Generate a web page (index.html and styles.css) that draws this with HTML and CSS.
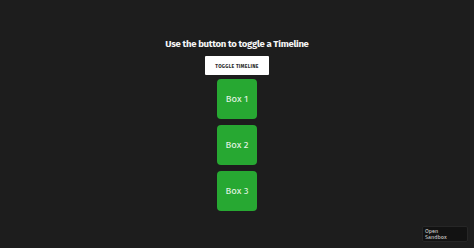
FILE: index.html
```html
<!DOCTYPE html>
<html>
<head>
<meta charset="utf-8">
<link rel="stylesheet" href="styles.css">
</head>
<body>
<main class="app">
  <h2 class="title">Use the button to toggle a Timeline</h2>
  <button class="toggle">TOGGLE TIMELINE</button>
  <div class="boxes">
    <div class="box">Box 1</div>
    <div class="box">Box 2</div>
    <div class="box">Box 3</div>
  </div>
</main>
<a class="sandbox">Open<br>Sandbox</a>
</body>
</html>
```
FILE: styles.css
```css
html, body {
  margin: 0;
  height: 100%;
}
body {
  background: #1d1d1d;
  font-family: "Fira Sans", "Noto Sans", "Open Sans", sans-serif;
  color: #ffffff;
}
.app {
  display: flex;
  flex-direction: column;
  align-items: center;
  padding-top: 37px;
}
.title {
  margin: 0;
  font-size: 9.6px;
  line-height: 14px;
  font-weight: 700;
  letter-spacing: -0.3px;
  color: #f4f4f4;
}
.toggle {
  margin-top: 5px;
  width: 64px;
  height: 19px;
  padding: 0;
  border: none;
  border-radius: 1px;
  background: #ffffff;
  color: #2a2a2a;
  font-family: inherit;
  font-size: 5px;
  font-weight: 700;
  letter-spacing: 0.25px;
}
.boxes {
  margin-top: 4px;
  display: flex;
  flex-direction: column;
  gap: 6px;
}
.box {
  width: 40px;
  height: 40px;
  border-radius: 4px;
  background: #27a832;
  color: #e8f6e8;
  font-size: 9.5px;
  font-weight: 400;
  display: flex;
  align-items: center;
  justify-content: center;
}
.sandbox {
  position: absolute;
  right: 6px;
  bottom: 6px;
  width: 40px;
  padding: 1px 2px;
  background: #121212;
  border: 1px solid #262626;
  border-radius: 2px;
  color: #d8d8d8;
  font-size: 5.5px;
  line-height: 6px;
}
```
